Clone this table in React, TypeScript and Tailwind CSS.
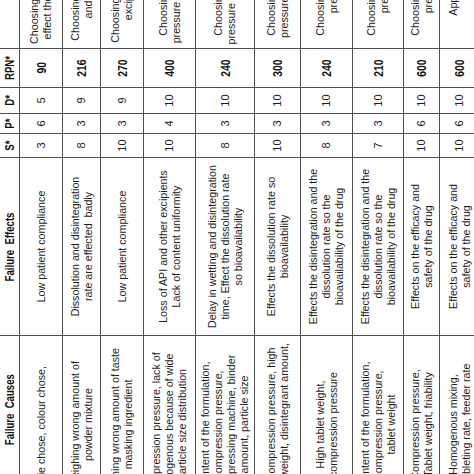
import React from "react";

type Row = {
  h: string;
  cause: string[];
  effect: string[];
  s: string;
  p: string;
  d: string;
  rpn: string;
  rec: string[];
};

const rows: Row[] = [
  {
    h: "h-[43px]",
    cause: ["Die chose, colour chose,"],
    effect: ["Low patient compliance"],
    s: "3",
    p: "6",
    d: "5",
    rpn: "90",
    rec: ["Choosing the sweetener and flavour that", "effect the taste and patient compliance"],
  },
  {
    h: "h-[38px]",
    cause: ["Weighing wrong amount of", "powder mixture"],
    effect: ["Dissolution and disintegration", "rate are effected  badly"],
    s: "8",
    p: "3",
    d: "9",
    rpn: "216",
    rec: ["Choosing the calibrated weighing scale", "and the well trained operators"],
  },
  {
    h: "h-[43px]",
    cause: ["Weighing wrong amount of taste", "masking ingredient"],
    effect: ["Low patient compliance"],
    s: "10",
    p: "3",
    d: "9",
    rpn: "270",
    rec: ["Choosing the right amount of sweetener", "excipient for the taste masking"],
  },
  {
    h: "h-[52px]",
    cause: ["Compression pressure, lack of", "homogenous because of wide", "particle size distribution"],
    effect: ["Loss of API and other excipients", "Lack of content uniformity"],
    s: "10",
    p: "4",
    d: "10",
    rpn: "400",
    rec: ["Choosing the optimized compression", "pressure and uniform particle size range"],
  },
  {
    h: "h-[59px]",
    cause: ["Content of the formulation,", "compression pressure,", "compressing machine, binder", "amount, particle size"],
    effect: ["Delay in wetting and disintegration", "time, Effect the dissolution rate", "so bioavailability"],
    s: "8",
    p: "3",
    d: "10",
    rpn: "240",
    rec: ["Choosing the optimized compression", "pressure and the binder amount in range"],
  },
  {
    h: "h-[46px]",
    cause: ["Low compression pressure, high", "tablet weight, disintegrant amount,"],
    effect: ["Effects the dissolution rate so", "bioavailability"],
    s: "10",
    p: "3",
    d: "10",
    rpn: "300",
    rec: ["Choosing the optimized compression", "pressure, and the disintegrant amount"],
  },
  {
    h: "h-[52px]",
    cause: ["High tablet weight,", "compression pressure"],
    effect: ["Effects the disintegration and the", "dissolution rate so the", "bioavailability of the drug"],
    s: "8",
    p: "3",
    d: "10",
    rpn: "240",
    rec: ["Choosing the optimized compression", "pressure and tablet weights"],
  },
  {
    h: "h-[51px]",
    cause: ["Content of the formulation,", "compression pressure,", "tablet weight"],
    effect: ["Effects the disintegration and the", "dissolution rate so the", "bioavailability of the drug"],
    s: "7",
    p: "3",
    d: "10",
    rpn: "210",
    rec: ["Choosing the optimized compression", "pressure and tablet weights"],
  },
  {
    h: "h-[36px]",
    cause: ["Compression pressure,", "Tablet weight, friability"],
    effect: ["Effects on the efficacy and", "safety of the drug"],
    s: "10",
    p: "6",
    d: "10",
    rpn: "600",
    rec: ["Choosing the optimized compression", "pressure and tablet weights"],
  },
  {
    h: "h-[40px]",
    cause: ["Homogenous mixing,", "Tableting rate, feeder rate"],
    effect: ["Effects on the efficacy and", "safety of the drug"],
    s: "10",
    p: "6",
    d: "10",
    rpn: "600",
    rec: ["Appropriate mixing, tableting", "and feeder rate"],
  },
];

const line = "border-[#505050]";
const body = "font-['Liberation_Sans',Arial,sans-serif] text-[10.7px] leading-[13px] text-[#1d1d1d]";
const narrow =
  "inline-block scale-x-[0.8] font-['Liberation_Sans',Arial,sans-serif] font-bold text-[#111] whitespace-pre";

function Lines({ lines }: { lines: string[] }) {
  return (
    <div className="whitespace-pre">
      {lines.map((l, i) => (
        <div key={i}>{l}</div>
      ))}
    </div>
  );
}

export default function App() {
  return (
    <div className="w-[474px] h-[474px] overflow-hidden bg-white">
      <div className="w-[665px] origin-top-left [transform:translate(0px,513px)_rotate(-90deg)]">
        <div className={`grid grid-cols-[178px_178px_24px_20px_26px_39px_200px] h-[20px] border-b ${line} text-[12px] leading-[14px]`}>
          <div className={`flex items-center justify-center pl-[30px] border-r ${line}`}>
            <span className={narrow}>Failure  Causes</span>
          </div>
          <div className={`flex items-center justify-center border-r ${line}`}>
            <span className={narrow}>Failure  Effects</span>
          </div>
          <div className={`flex items-center justify-center border-r ${line}`}>
            <span className={narrow}>S*</span>
          </div>
          <div className={`flex items-center justify-center border-r ${line}`}>
            <span className={narrow}>P*</span>
          </div>
          <div className={`flex items-center justify-center border-r ${line}`}>
            <span className={narrow}>D*</span>
          </div>
          <div className={`flex items-center justify-center border-r ${line}`}>
            <span className={narrow}>RPN*</span>
          </div>
          <div className="flex items-center justify-center">
            <span className={narrow}>Recommended Action</span>
          </div>
        </div>
        {rows.map((r, i) => (
          <div
            key={i}
            className={`grid grid-cols-[178px_178px_24px_20px_26px_39px_200px] border-b ${line} ${r.h} ${body}`}
          >
            <div className={`flex items-center justify-center text-center border-r ${line}`}>
              <Lines lines={r.cause} />
            </div>
            <div className={`flex items-center justify-center text-center border-r ${line}`}>
              <Lines lines={r.effect} />
            </div>
            <div className={`flex items-center justify-center border-r ${line} text-[11px]`}>{r.s}</div>
            <div className={`flex items-center justify-center border-r ${line} text-[11px]`}>{r.p}</div>
            <div className={`flex items-center justify-center border-r ${line} text-[11px]`}>{r.d}</div>
            <div className={`flex items-center justify-center border-r ${line} text-[13px]`}>
              <span className={narrow}>{r.rpn}</span>
            </div>
            <div className="flex items-center justify-center text-center">
              <Lines lines={r.rec} />
            </div>
          </div>
        ))}
      </div>
    </div>
  );
}
